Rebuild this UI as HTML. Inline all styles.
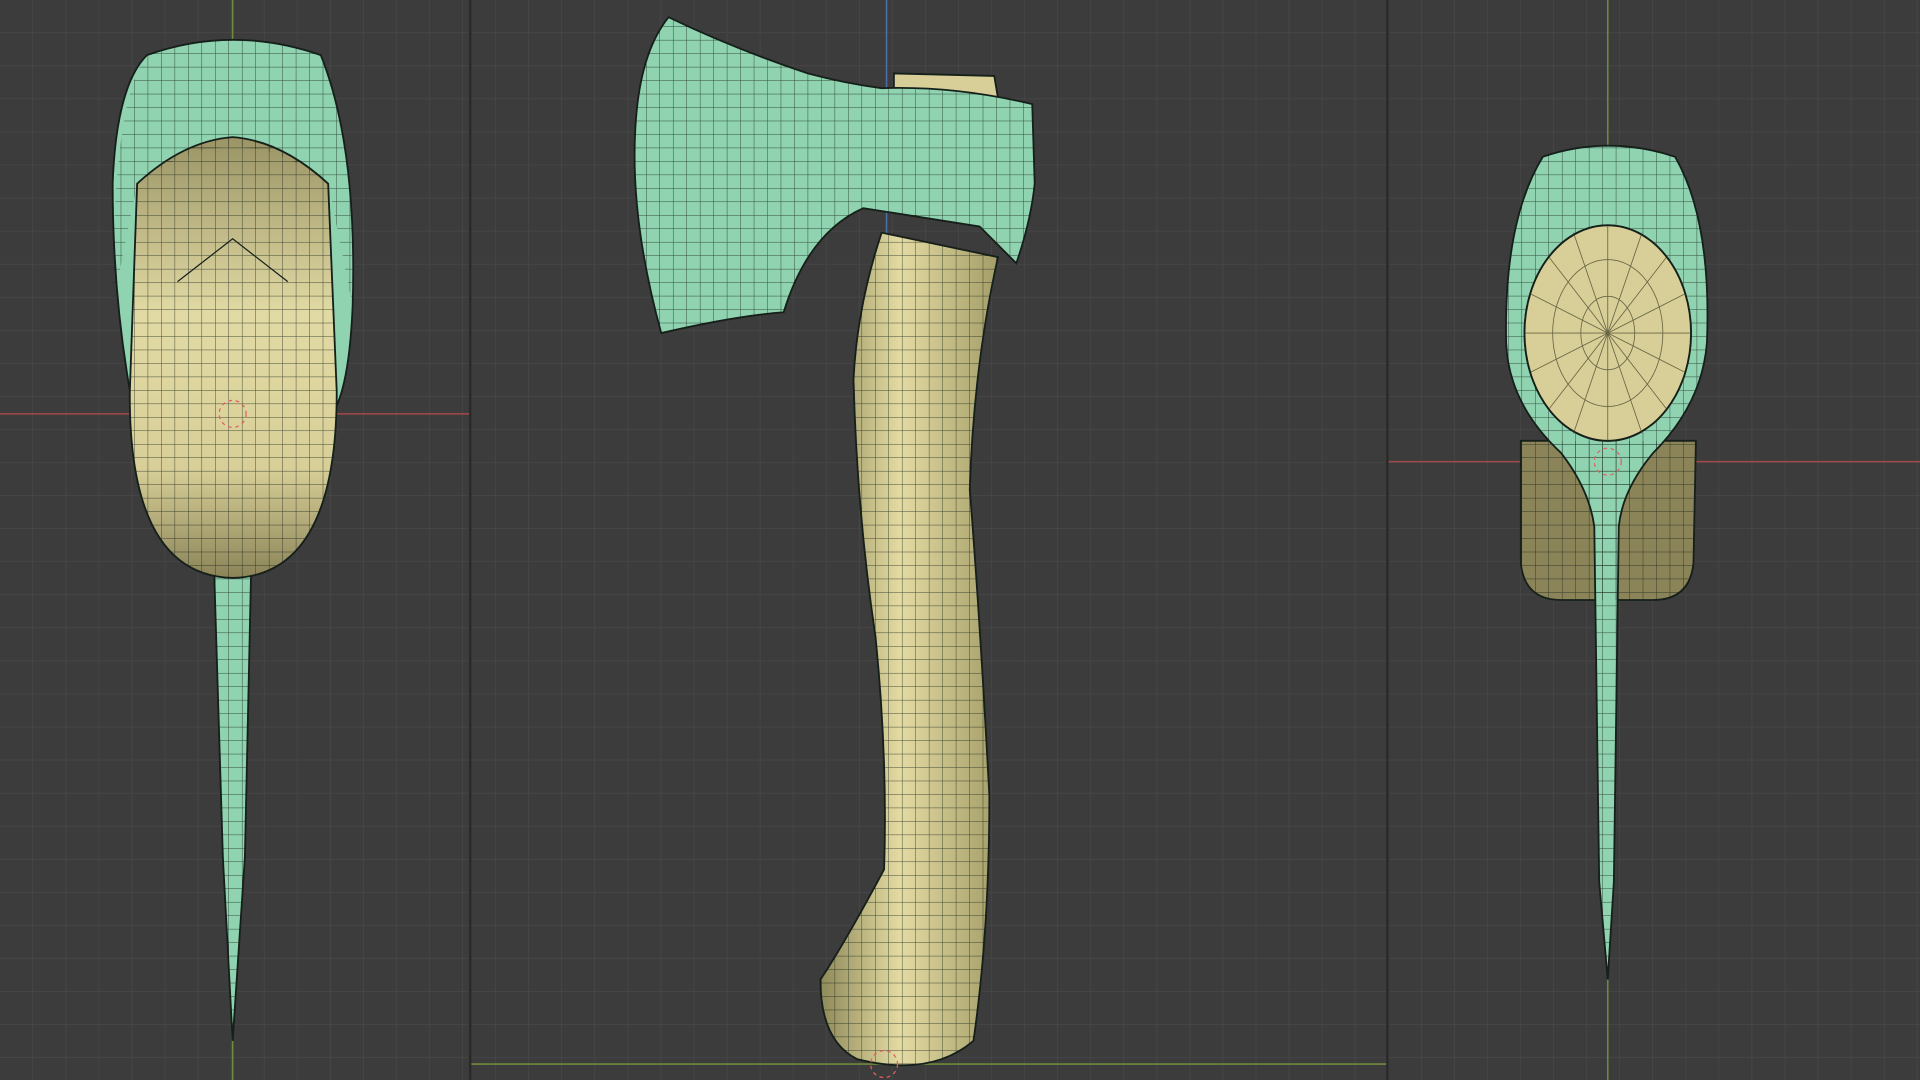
<!DOCTYPE html>
<html><head><meta charset="utf-8"><style>html,body{margin:0;padding:0;background:#3c3c3c;overflow:hidden}svg{display:block}</style></head>
<body>
<svg width="1920" height="1080" viewBox="0 0 1568 882" preserveAspectRatio="none" xmlns="http://www.w3.org/2000/svg">
<defs>
<pattern id="g" width="27" height="27" patternUnits="userSpaceOnUse"><path d="M27 0V27H0" fill="none" stroke="#4a4a4a" stroke-width="1"/></pattern>
<pattern id="m" width="11" height="11" patternUnits="userSpaceOnUse"><path d="M11 0V11H0" fill="none" stroke="#152018" stroke-width="0.8" opacity="0.75"/></pattern>
<linearGradient id="bh" x1="0" y1="0" x2="1" y2="0"><stop offset="0" stop-color="#8f8a5a"/><stop offset="0.45" stop-color="#e3dba2"/><stop offset="1" stop-color="#a49d68"/></linearGradient>
<linearGradient id="bv" x1="0" y1="0" x2="0" y2="1"><stop offset="0" stop-color="#9a9466"/><stop offset="0.4" stop-color="#e2daa4"/><stop offset="0.75" stop-color="#d8cf98"/><stop offset="1" stop-color="#8b8458"/></linearGradient>
</defs>
<rect width="1568" height="882" fill="#3c3c3c"/>
<rect width="1568" height="882" fill="url(#g)"/>
<rect x="383" y="0" width="2" height="882" fill="#2a2a2a"/>
<rect x="1132" y="0" width="2" height="882" fill="#2a2a2a"/>
<line x1="0" y1="338" x2="383" y2="338" stroke="#a34848" stroke-width="1.3"/>
<line x1="190" y1="0" x2="190" y2="882" stroke="#6e8a3c" stroke-width="1.3"/>
<line x1="724" y1="0" x2="724" y2="869" stroke="#4a6fa8" stroke-width="1.3"/>
<line x1="385" y1="869" x2="1132" y2="869" stroke="#6e8a3c" stroke-width="1.3"/>
<line x1="1134" y1="377" x2="1568" y2="377" stroke="#a34848" stroke-width="1.3"/>
<line x1="1313" y1="0" x2="1313" y2="882" stroke="#6e8a3c" stroke-width="1.3"/>

<!-- LEFT -->
<g stroke="#16201a" stroke-width="1.5">
<path d="M120 45 Q190 20 262 45 Q292 120 288 250 Q285 320 270 340 L110 340 Q92 250 92 150 Q95 70 120 45Z" fill="#8fd3b0"/>
<path d="M175 470 L205 470 L200 700 L190 850 L182 700Z" fill="#8fd3b0"/>
<path d="M112 150 Q150 115 190 112 Q230 115 268 150 L275 320 Q275 470 190 472 Q105 470 106 320Z" fill="url(#bv)"/>
<path d="M145 230 L190 195 L235 230" fill="none" stroke-width="1"/>
</g>
<path d="M112 150 Q150 115 190 112 Q230 115 268 150 L275 320 Q275 470 190 472 Q105 470 106 320Z" fill="url(#m)"/>
<path d="M120 45 Q190 20 262 45 Q292 120 288 250 L268 150 Q190 90 112 150 L92 250 Q92 80 120 45Z" fill="url(#m)"/>
<path d="M175 470 L205 470 L200 700 L190 850 L182 700Z" fill="url(#m)"/>
<circle cx="190" cy="338" r="11" fill="none" stroke="#e06060" stroke-dasharray="3 3"/>

<!-- MIDDLE -->
<g stroke="#16201a" stroke-width="1.5">
<path d="M730 60 L812 62 L815 80 L730 78Z" fill="#d8cf98"/>
<path d="M720 190 Q700 250 697 310 Q700 420 715 520 Q725 620 722 710 Q690 770 670 800 Q670 850 700 865 Q760 880 795 850 Q808 760 808 650 Q800 500 792 400 Q795 300 815 210 Z" fill="url(#bh)"/>
<path d="M546 14 Q525 40 520 90 Q512 170 540 272 Q600 258 640 255 Q660 190 705 170 L800 185 L830 215 Q842 180 845 150 L843 85 Q780 70 720 72 Q690 68 660 60 Q600 40 546 14Z" fill="#8fd3b0"/>
</g>
<path d="M720 190 Q700 250 697 310 Q700 420 715 520 Q725 620 722 710 Q690 770 670 800 Q670 850 700 865 Q760 880 795 850 Q808 760 808 650 Q800 500 792 400 Q795 300 815 210 Z" fill="url(#m)"/>
<path d="M546 14 Q525 40 520 90 Q512 170 540 272 Q600 258 640 255 Q660 190 705 170 L800 185 L830 215 Q842 180 845 150 L843 85 Q780 70 720 72 Q690 68 660 60 Q600 40 546 14Z" fill="url(#m)"/>
<circle cx="722" cy="869" r="11" fill="none" stroke="#e06060" stroke-dasharray="3 3"/>

<!-- RIGHT -->
<g stroke="#16201a" stroke-width="1.5">
<path d="M1242 360 L1385 360 L1383 460 Q1380 490 1350 490 L1275 490 Q1245 490 1242 460Z" fill="#8b8458"/>
<path d="M1260 128 Q1313 110 1368 128 Q1398 180 1394 280 Q1390 330 1350 370 Q1325 400 1322 430 L1318 720 L1313 800 L1306 720 L1302 430 Q1298 400 1275 370 Q1232 330 1230 280 Q1228 180 1260 128Z" fill="#8fd3b0"/>
<ellipse cx="1313" cy="272" rx="68" ry="88" fill="#d8cf98"/>
</g>
<path d="M1242 360 L1385 360 L1383 460 Q1380 490 1350 490 L1275 490 Q1245 490 1242 460Z" fill="url(#m)"/>
<path d="M1260 128 Q1313 110 1368 128 Q1398 180 1394 280 Q1390 330 1350 370 Q1325 400 1322 430 L1318 720 L1313 800 L1306 720 L1302 430 Q1298 400 1275 370 Q1232 330 1230 280 Q1228 180 1260 128Z" fill="url(#m)"/>
<ellipse cx="1313" cy="272" rx="68" ry="88" fill="#d8cf98" stroke="#16201a" stroke-width="1.5"/>
<g stroke="#3a3a22" stroke-width="0.7" opacity="0.7">
<line x1="1313" y1="184" x2="1313" y2="360"/><line x1="1245" y1="272" x2="1381" y2="272"/>
<line x1="1265" y1="210" x2="1361" y2="334"/><line x1="1361" y1="210" x2="1265" y2="334"/>
<line x1="1285" y1="190" x2="1341" y2="354"/><line x1="1341" y1="190" x2="1285" y2="354"/>
<line x1="1250" y1="240" x2="1376" y2="304"/><line x1="1376" y1="240" x2="1250" y2="304"/>
<ellipse cx="1313" cy="272" rx="45" ry="60" fill="none"/><ellipse cx="1313" cy="272" rx="22" ry="30" fill="none"/>
</g>
<circle cx="1313" cy="377" r="11" fill="none" stroke="#e06060" stroke-dasharray="3 3"/>
</svg>
</body></html>
